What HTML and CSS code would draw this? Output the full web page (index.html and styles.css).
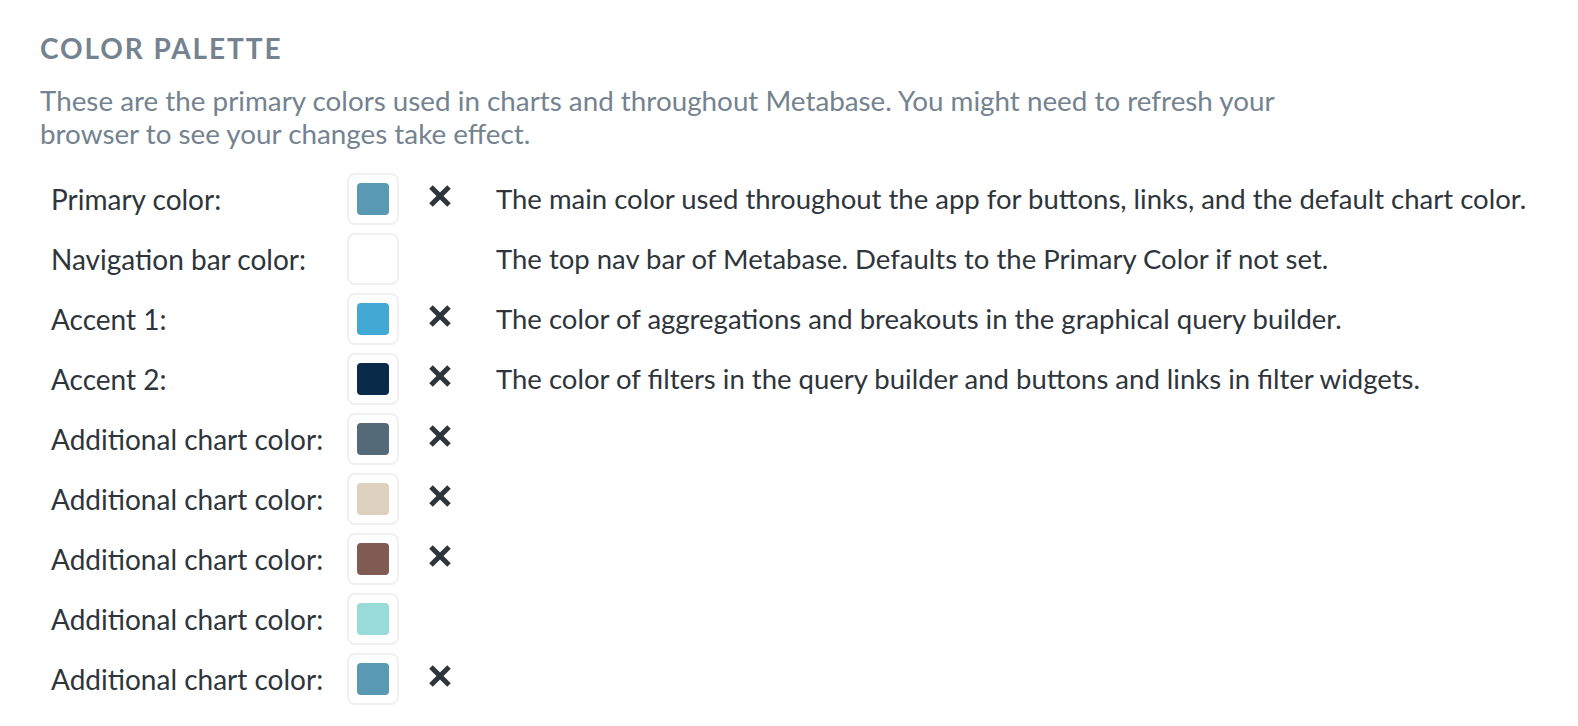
FILE: index.html
```html
<!DOCTYPE html>
<html lang="en">
<head>
<meta charset="utf-8">
<title>Color Palette</title>
<link rel="stylesheet" href="styles.css">
</head>
<body>
<div class="page">
  <h2 class="title">Color Palette</h2>
  <p class="intro">These are the primary colors used in charts and throughout Metabase. You might need to refresh your browser to see your changes take effect.</p>
  <div class="rows">
    <div class="row">
      <div class="label">Primary color:</div>
      <div class="box"><div class="swatch" style="background:#5a99b3"></div></div>
      <div class="clear"><svg viewBox="0 0 24 24" class="x"><path d="M3 3L21 21M21 3L3 21"/></svg></div>
      <div class="desc">The main color used throughout the app for buttons, links, and the default chart color.</div>
    </div>
    <div class="row">
      <div class="label">Navigation bar color:</div>
      <div class="box"><div class="swatch" style="background:#ffffff"></div></div>
      <div class="clear"></div>
      <div class="desc">The top nav bar of Metabase. Defaults to the Primary Color if not set.</div>
    </div>
    <div class="row">
      <div class="label">Accent 1:</div>
      <div class="box"><div class="swatch" style="background:#44a8d5"></div></div>
      <div class="clear"><svg viewBox="0 0 24 24" class="x"><path d="M3 3L21 21M21 3L3 21"/></svg></div>
      <div class="desc">The color of aggregations and breakouts in the graphical query builder.</div>
    </div>
    <div class="row">
      <div class="label">Accent 2:</div>
      <div class="box"><div class="swatch" style="background:#0a2a4a"></div></div>
      <div class="clear"><svg viewBox="0 0 24 24" class="x"><path d="M3 3L21 21M21 3L3 21"/></svg></div>
      <div class="desc">The color of filters in the query builder and buttons and links in filter widgets.</div>
    </div>
    <div class="row">
      <div class="label">Additional chart color:</div>
      <div class="box"><div class="swatch" style="background:#546a79"></div></div>
      <div class="clear"><svg viewBox="0 0 24 24" class="x"><path d="M3 3L21 21M21 3L3 21"/></svg></div>
      <div class="desc"></div>
    </div>
    <div class="row">
      <div class="label">Additional chart color:</div>
      <div class="box"><div class="swatch" style="background:#ddd0bf"></div></div>
      <div class="clear"><svg viewBox="0 0 24 24" class="x"><path d="M3 3L21 21M21 3L3 21"/></svg></div>
      <div class="desc"></div>
    </div>
    <div class="row">
      <div class="label">Additional chart color:</div>
      <div class="box"><div class="swatch" style="background:#7f5b54"></div></div>
      <div class="clear"><svg viewBox="0 0 24 24" class="x"><path d="M3 3L21 21M21 3L3 21"/></svg></div>
      <div class="desc"></div>
    </div>
    <div class="row">
      <div class="label">Additional chart color:</div>
      <div class="box"><div class="swatch" style="background:#98dbd8"></div></div>
      <div class="clear"></div>
      <div class="desc"></div>
    </div>
    <div class="row">
      <div class="label">Additional chart color:</div>
      <div class="box"><div class="swatch" style="background:#5a99b3"></div></div>
      <div class="clear"><svg viewBox="0 0 24 24" class="x"><path d="M3 3L21 21M21 3L3 21"/></svg></div>
      <div class="desc"></div>
    </div>
  </div>
</div>
</body>
</html>
```
FILE: styles.css
```css
html, body {
  margin: 0;
  padding: 0;
  background: #ffffff;
}
body {
  font-family: Lato, "Open Sans", sans-serif;
  color: #2e353b;
}
.page {
  padding: 32px 0 0 40px;
}
.title {
  margin: 0;
  font-size: 28px;
  line-height: 1.2;
  font-weight: 700;
  letter-spacing: 1.9px;
  text-transform: uppercase;
  color: #74838f;
}
.intro {
  margin: 18px 0 0 0;
  max-width: 1280px;
  font-size: 27.8px;
  line-height: 33px;
  color: #74838f;
}
.rows {
  margin-top: 19px;
}
.row {
  display: grid;
  grid-template-columns: 307px 52px 97px 1fr;
  align-items: center;
  height: 60px;
}
.label {
  padding-left: 11px;
  font-size: 28px;
  white-space: nowrap;
}
.box {
  box-sizing: border-box;
  width: 52px;
  height: 52px;
  padding: 8px;
  border: 2px solid #f0f0f0;
  border-radius: 8px;
}
.swatch {
  width: 32px;
  height: 32px;
  border-radius: 4px;
}
.clear {
  padding-left: 29px;
  display: flex;
  align-items: center;
  margin-top: -6px;
}
.x {
  width: 24px;
  height: 24px;
  fill: none;
  stroke: #2e353b;
  stroke-width: 5;
}
.desc {
  font-size: 27.5px;
  white-space: nowrap;
}
```
